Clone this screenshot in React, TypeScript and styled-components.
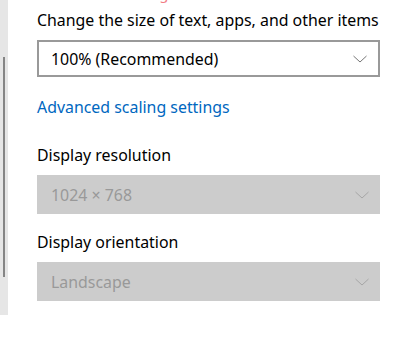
import React from 'react';
import styled, { createGlobalStyle } from 'styled-components';

const GlobalStyle = createGlobalStyle`
  html, body {
    margin: 0;
    padding: 0;
    background: #ffffff;
  }
  body {
    font-family: 'Noto Sans', 'Open Sans', sans-serif;
    color: #000000;
  }
`;

const Page = styled.div`
  display: flex;
  width: 414px;
  height: 340px;
  overflow: hidden;
`;

const Rail = styled.div`
  width: 8px;
  height: 315px;
  flex-shrink: 0;
  background: #e6e6e6;
  padding-top: 57px;
  box-sizing: border-box;
`;

const Thumb = styled.div`
  width: 2px;
  height: 220px;
  margin-left: 3px;
  background: #858585;
`;

const Content = styled.div`
  display: flex;
  flex-direction: column;
  padding-left: 29px;
  width: 343px;
`;

const CutWarning = styled.div`
  height: 3px;
  overflow: hidden;
  display: flex;
  align-items: flex-end;
  color: #e81123;
  font-size: 15px;
  line-height: 20px;
  padding-left: 88px;
  opacity: 0.55;
`;

const Label = styled.div<{ $top: number }>`
  margin-top: ${(p) => p.$top}px;
  font-size: 15.9px;
  line-height: 20px;
  color: #000000;
  white-space: nowrap;
`;

const Link = styled.a`
  margin-top: 20px;
  font-size: 15.9px;
  line-height: 20px;
  color: #0067c0;
  text-decoration: none;
  cursor: pointer;
`;

const Select = styled.div<{ $disabled?: boolean }>`
  margin-top: 10px;
  height: ${(p) => (p.$disabled ? 39 : 37)}px;
  box-sizing: border-box;
  display: flex;
  align-items: center;
  justify-content: space-between;
  padding: 0 10px 0 14px;
  border: ${(p) => (p.$disabled ? 'none' : '2px solid #999999')};
  padding-left: ${(p) => (p.$disabled ? 14 : 12)}px;
  background: ${(p) => (p.$disabled ? '#cccccc' : '#ffffff')};
  color: ${(p) => (p.$disabled ? '#999999' : '#000000')};
  font-size: 15.9px;
`;

const Chevron = ({ color }: { color: string }) => (
  <svg width="16" height="10" viewBox="0 0 16 10">
    <path d="M1.5 2 L8 8 L14.5 2" fill="none" stroke={color} strokeWidth="1" />
  </svg>
);

export default function App() {
  return (
    <>
      <GlobalStyle />
      <Page>
        <Rail>
          <Thumb />
        </Rail>
        <Content>
          <CutWarning>Some apps won't respond to scaling changes</CutWarning>
          <Label $top={7}>Change the size of text, apps, and other items</Label>
          <Select>
            <span>100% (Recommended)</span>
            <Chevron color="#767676" />
          </Select>
          <Link>Advanced scaling settings</Link>
          <Label $top={28}>Display resolution</Label>
          <Select $disabled>
            <span>1024 × 768</span>
            <Chevron color="#a6a6a6" />
          </Select>
          <Label $top={18}>Display orientation</Label>
          <Select $disabled>
            <span>Landscape</span>
            <Chevron color="#a6a6a6" />
          </Select>
        </Content>
      </Page>
    </>
  );
}
